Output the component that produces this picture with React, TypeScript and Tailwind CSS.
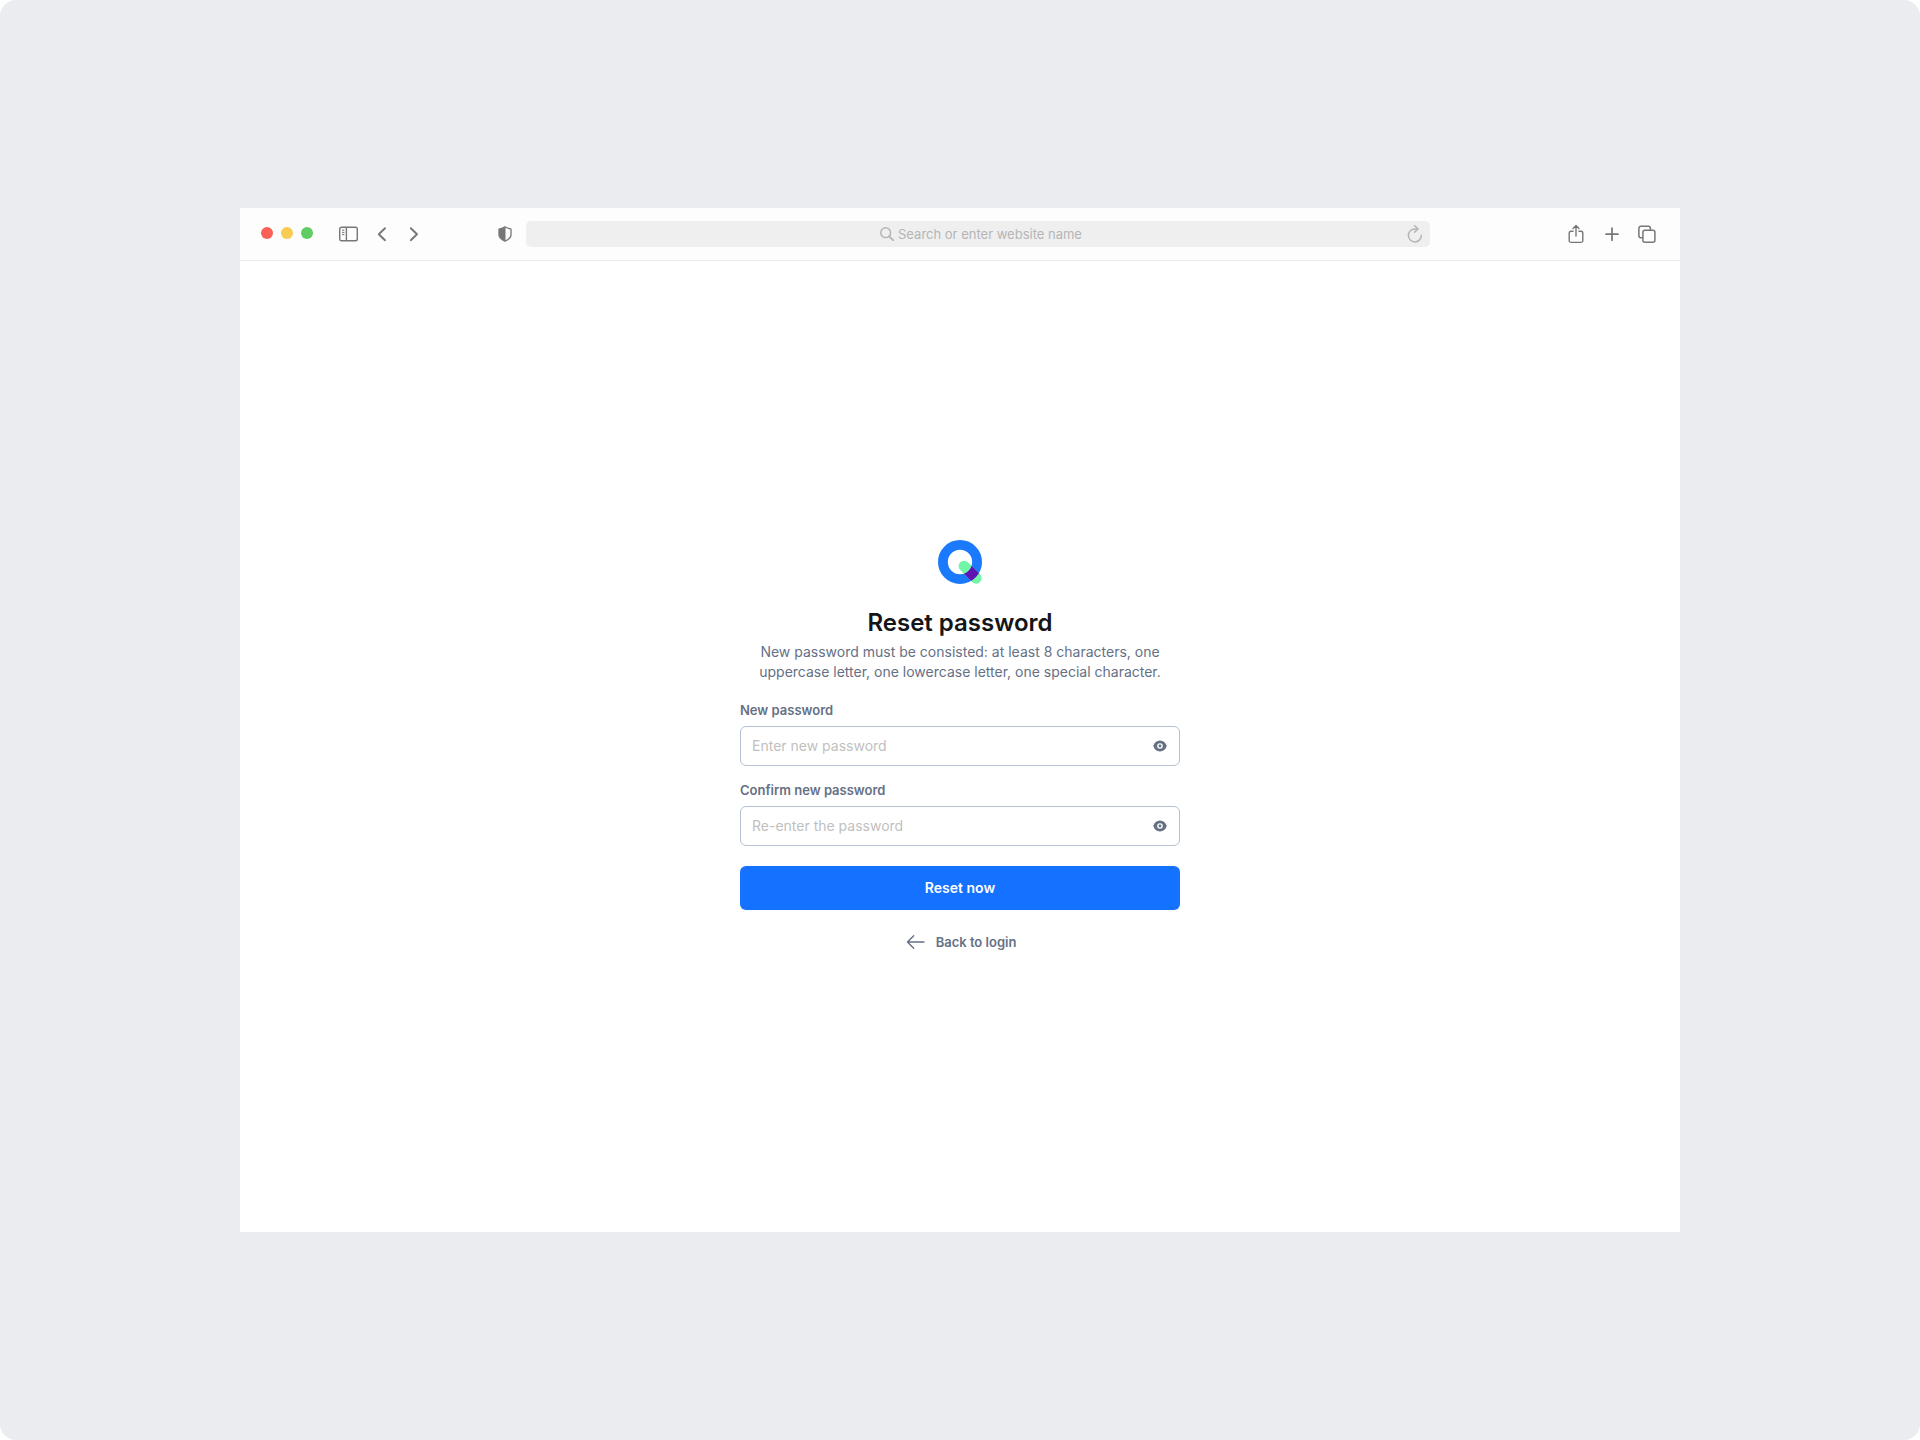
import { useState } from 'react';

interface PasswordFieldProps {
  id: string;
  label: string;
  placeholder: string;
}

function Logo() {
  return (
    <svg className="w-11 h-11" viewBox="0 0 44 44" fill="none" aria-hidden="true">
      <defs>
        <clipPath id="logo-tail">
          <rect x="20.6" y="20.7" width="28" height="11" rx="5.5" transform="rotate(45 26.1 26.2)" />
        </clipPath>
      </defs>
      <circle cx="22" cy="22" r="17.1" stroke="#1b79fb" strokeWidth="9.8" />
      <rect x="20.6" y="20.7" width="28" height="11" rx="5.5" transform="rotate(45 26.1 26.2)" fill="#73f5a7" />
      <circle cx="22" cy="22" r="17.1" stroke="#5f14b4" strokeWidth="9.8" clipPath="url(#logo-tail)" />
    </svg>
  );
}

function EyeIcon() {
  return (
    <svg className="w-3.5 h-3" viewBox="0 0 14 12" fill="none" aria-hidden="true">
      <path
        fillRule="evenodd"
        d="M7 .5C3.7.5 1.2 2.6.3 6c.9 3.4 3.4 5.5 6.7 5.5s5.8-2.1 6.7-5.5C12.8 2.6 10.3.5 7 .5Zm0 8.3a2.8 2.8 0 1 1 0-5.6 2.8 2.8 0 0 1 0 5.6Z"
        fill="#667085"
      />
      <circle cx="7" cy="6" r="1.4" fill="#667085" />
    </svg>
  );
}

function PasswordField({ id, label, placeholder }: PasswordFieldProps) {
  const [visible, setVisible] = useState(false);

  return (
    <div>
      <label htmlFor={id} className="block text-[13px] leading-5 font-semibold text-[#667085]">
        {label}
      </label>
      <div className="mt-1.5 flex h-10 items-center rounded-md border border-[#b4c2d3] bg-white pl-[11px] pr-3">
        <input
          id={id}
          type={visible ? 'text' : 'password'}
          placeholder={placeholder}
          className="min-w-0 flex-1 bg-transparent text-sm text-[#101828] outline-none placeholder:text-[#bfbfbf]"
        />
        <button
          type="button"
          aria-label={visible ? 'Hide password' : 'Show password'}
          onClick={() => setVisible(!visible)}
          className="shrink-0 cursor-pointer"
        >
          <EyeIcon />
        </button>
      </div>
    </div>
  );
}

function BrowserToolbar() {
  return (
    <header className="flex h-[53px] shrink-0 items-center border-b border-[#ececec] bg-[#fdfdfd] text-[#777777]">
      <div className="flex w-[286px] shrink-0 items-center pl-[21px]">
        {/* Window controls */}
        <div className="flex gap-2 pb-0.5">
          <span className="size-3 rounded-full bg-[#fb6058]" />
          <span className="size-3 rounded-full bg-[#f8cb52]" />
          <span className="size-3 rounded-full bg-[#5fcd61]" />
        </div>

        <button type="button" aria-label="Toggle sidebar" className="ml-[26px]">
          <svg className="w-5 h-4" viewBox="0 0 20 16" fill="none" stroke="currentColor" strokeWidth="1.4">
            <rect x=".7" y="1.2" width="17.6" height="13.6" rx="1.8" />
            <path d="M7.4 1.2v13.6" />
            <path d="M3 4.2h2.4M3 6.4h2.4M3 8.6h2.4" strokeWidth="1" />
          </svg>
        </button>
        <button type="button" aria-label="Back" className="ml-[17px]">
          <svg className="w-3 h-4" viewBox="0 0 12 16" fill="none" stroke="currentColor" strokeWidth="1.9" strokeLinecap="round" strokeLinejoin="round">
            <path d="m9 2.200-6.200 6 6.200 6" />
          </svg>
        </button>
        <button type="button" aria-label="Forward" className="ml-5">
          <svg className="w-3 h-4" viewBox="0 0 12 16" fill="none" stroke="currentColor" strokeWidth="1.9" strokeLinecap="round" strokeLinejoin="round">
            <path d="m2.800 2.200 6.200 6-6.200 6" />
          </svg>
        </button>
        <button type="button" aria-label="Privacy report" className="ml-auto mr-3.5">
          <svg className="w-3.5 h-4" viewBox="0 0 14 16" fill="none">
            <path
              d="M7 .8c1.700 1.200 3.600 1.800 5.500 2 .3 0 .5.2.5.5v5.800c0 2.600-3.400 4.900-6 6.100-2.600-1.200-6-3.500-6-6.100V3.300c0-.3.2-.5.5-.5C3.400 2.600 5.300 2 7 .8Z"
              stroke="currentColor"
              strokeWidth="1.3"
              strokeLinejoin="round"
            />
            <path d="M7.500.8C5.300 2 3.400 2.600 1.500 2.800c-.3 0-.5.2-.5.5v5.800c0 2.600 3.400 4.900 6.500 6.100V.8Z" fill="currentColor" />
          </svg>
        </button>
      </div>

      {/* Address bar */}
      <div className="flex h-[26px] min-w-0 flex-1 items-center rounded-[5px] bg-[#efefef] pl-[29px] pr-[7px] text-[#b5b5b5]">
        <label className="flex flex-1 items-center justify-center gap-1">
          <svg className="size-3.5" viewBox="0 0 14 14" fill="none" stroke="currentColor" strokeWidth="1.5" strokeLinecap="round">
            <circle cx="5.7" cy="5.7" r="4.9" />
            <path d="m9.3 9.3 4 4" strokeWidth="1.8" />
          </svg>
          <input
            type="text"
            aria-label="Address"
            placeholder="Search or enter website name"
            className="field-sizing-content bg-transparent text-[13px] leading-5 outline-none placeholder:text-[#b5b5b5]"
          />
        </label>
        <button type="button" aria-label="Reload">
          <svg className="w-4 h-[18px]" viewBox="0 0 16 18" fill="none" stroke="currentColor" strokeWidth="1.5" strokeLinecap="round" strokeLinejoin="round">
            <path d="M14.4 10.2A6.500 6.500 0 1 1 8 3.900h2.600" />
            <path d="m7.700.8 3.200 3.100-3.200 3.200" />
          </svg>
        </button>
      </div>

      <div className="flex w-[250px] shrink-0 items-center justify-end pr-6">
        <button type="button" aria-label="Share">
          <svg className="w-4 h-5" viewBox="0 0 16 20" fill="none" stroke="currentColor" strokeWidth="1.4" strokeLinecap="round" strokeLinejoin="round">
            <path d="M5 7.2H3A1.8 1.8 0 0 0 1.2 9v7.6A1.8 1.8 0 0 0 3 18.4h10a1.8 1.8 0 0 0 1.8-1.8V9A1.8 1.8 0 0 0 13 7.2h-2" />
            <path d="M8 12V1.7M5 4.400l3-3 3 3" />
          </svg>
        </button>
        <button type="button" aria-label="New tab" className="ml-5">
          <svg className="size-4" viewBox="0 0 16 16" fill="none" stroke="currentColor" strokeWidth="1.7" strokeLinecap="round">
            <path d="M8 2.2v12M2 8.2h12" />
          </svg>
        </button>
        <button type="button" aria-label="Show tabs" className="ml-[18px]">
          <svg className="size-[18px]" viewBox="0 0 18 18" fill="none" stroke="currentColor" strokeWidth="1.5">
            <rect x="4.9" y="5.2" width="12" height="12" rx="2" />
            <path d="M4.900 12.700H2.900a2 2 0 0 1-2-2V3.200a2 2 0 0 1 2-2h7.500a2 2 0 0 1 2 2v2" />
          </svg>
        </button>
      </div>
    </header>
  );
}

export default function App() {
  return (
    <div className="bg-white font-[Inter,sans-serif]">
      <div className="flex min-h-screen flex-col rounded-2xl bg-[#ebecf0] px-[12.5%] py-52">
        <div className="flex flex-1 flex-col bg-white">
          <BrowserToolbar />

          <main className="flex flex-1 flex-col items-center justify-center pb-px">
            <Logo />
            <h1 className="mt-[23px] text-2xl leading-8 font-semibold text-[#141518]">Reset password</h1>
            <p className="mt-[3px] max-w-[420px] text-center text-sm leading-5 text-[#667085]">
              New password must be consisted: at least 8 characters, one uppercase letter, one lowercase letter, one
              special character.
            </p>

            <form className="mt-[18px] w-full max-w-[440px]" onSubmit={(e) => e.preventDefault()}>
              <div className="space-y-3.5">
                <PasswordField id="new-password" label="New password" placeholder="Enter new password" />
                <PasswordField id="confirm-password" label="Confirm new password" placeholder="Re-enter the password" />
              </div>
              <button
                type="submit"
                className="mt-5 h-11 w-full cursor-pointer rounded-md bg-[#1571ff] text-sm font-semibold text-white"
              >
                Reset now
              </button>
            </form>

            <a href="#login" className="mt-[22px] flex items-center gap-2 text-[13px] leading-5 font-semibold text-[#667085]">
              <svg className="w-6 h-4" viewBox="0 0 24 16" fill="none" stroke="currentColor" strokeWidth="1.4" strokeLinecap="round" strokeLinejoin="round">
                <path d="M20 8H3.5M9.7 1.8 3.5 8l6.2 6.2" />
              </svg>
              Back to login
            </a>
          </main>
        </div>
      </div>
    </div>
  );
}
